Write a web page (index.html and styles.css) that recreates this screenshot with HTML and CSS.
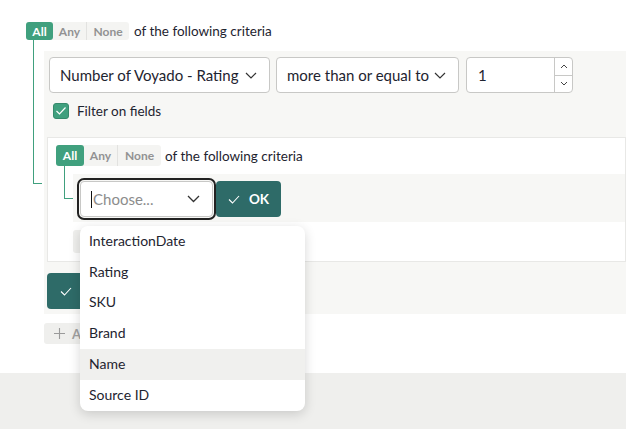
FILE: index.html
```html
<!DOCTYPE html>
<html>
<head>
<meta charset="utf-8">
<link rel="stylesheet" href="styles.css">
</head>
<body>
<div class="page">
  <div class="main">
    <div class="group">
      <div class="head">
        <div class="toggle">
          <span class="opt on">All</span><span class="opt">Any</span><span class="opt last">None</span>
        </div>
        <span class="head-text">of the following criteria</span>
      </div>
      <div class="panel outer">
        <div class="row">
          <div class="select s1"><span>Number of Voyado - Rating</span>
            <svg class="chev" width="12" height="7" viewBox="0 0 12 7"><path d="M1 1l5 5 5-5" fill="none" stroke="#333" stroke-width="1.2"/></svg>
          </div>
          <div class="select s2"><span>more than or equal to</span>
            <svg class="chev" width="12" height="7" viewBox="0 0 12 7"><path d="M1 1l5 5 5-5" fill="none" stroke="#333" stroke-width="1.2"/></svg>
          </div>
          <div class="number">
            <span class="num-val">1</span>
            <div class="spin">
              <div class="spin-btn"><svg width="8" height="5" viewBox="0 0 8 5"><path d="M1 4l3-3 3 3" fill="none" stroke="#444" stroke-width="1"/></svg></div>
              <div class="spin-btn"><svg width="8" height="5" viewBox="0 0 8 5"><path d="M1 1l3 3 3-3" fill="none" stroke="#444" stroke-width="1"/></svg></div>
            </div>
          </div>
        </div>
        <div class="check-row">
          <span class="checkbox"><svg width="12" height="10" viewBox="0 0 12 10"><path d="M1.5 5l3 3 6-6.5" fill="none" stroke="#fff" stroke-width="1.2"/></svg></span>
          <span class="check-label">Filter on fields</span>
        </div>
        <div class="nested">
          <div class="head small">
            <div class="toggle">
              <span class="opt on">All</span><span class="opt">Any</span><span class="opt last">None</span>
            </div>
            <span class="head-text">of the following criteria</span>
          </div>
          <div class="panel inner">
            <div class="choose">
              <span class="caret"></span><span class="placeholder">Choose...</span>
              <svg class="chev" width="13" height="8" viewBox="0 0 13 8"><path d="M1 1l5.5 5.5L12 1" fill="none" stroke="#333" stroke-width="1.3"/></svg>
            </div>
            <button class="ok">
              <svg width="12" height="9" viewBox="0 0 12 9"><path d="M1 4.5l3.5 3.5L11 1" fill="none" stroke="#fff" stroke-width="1.1"/></svg>
              <span>OK</span>
            </button>
          </div>
          <button class="add nested-add" aria-label="Add"></button>
        </div>
        <button class="ok outer-ok" aria-label="OK">
          <svg width="12" height="9" viewBox="0 0 12 9"><path d="M1 4.5l3.5 3.5L11 1" fill="none" stroke="#fff" stroke-width="1.1"/></svg>
        </button>
      </div>
      <button class="add outer-add">
        <svg class="plus" width="11" height="11" viewBox="0 0 11 11"><path d="M5.5 0v11M0 5.5h11" stroke="#9a9a9a" stroke-width="1.1"/></svg>
        <span>Add</span>
      </button>
    </div>
  </div>
  <div class="footer"></div>

  <ul class="menu">
    <li>InteractionDate</li>
    <li>Rating</li>
    <li>SKU</li>
    <li>Brand</li>
    <li class="hover">Name</li>
    <li>Source ID</li>
  </ul>
</div>
</body>
</html>
```

FILE: styles.css
```css
* { box-sizing: border-box; }
html, body { margin: 0; padding: 0; }
body {
  font-family: Lato, "Open Sans", sans-serif;
  color: #1e2430;
  background: #fff;
  width: 626px;
  height: 429px;
  overflow: hidden;
}
.page { position: relative; width: 626px; height: 429px; }
.main {
  height: 373px;
  padding: 22px 0 0 26px;
  overflow: hidden;
}
.footer { height: 56px; background: #efefed; }

.head { display: flex; align-items: center; height: 18px; }
.toggle {
  display: flex;
  background: #f4f4f2;
  border-radius: 3px;
  height: 18px;
}
.opt {
  font-size: 12px;
  font-weight: 700;
  color: #929292;
  display: flex;
  align-items: center;
  justify-content: center;
  height: 18px;
  border-right: 1px solid #e2e2e0;
}
.opt.on {
  background: #40a07e;
  color: #fff;
  border-radius: 3px;
  border-right: none;
  width: 27px;
}
.opt:nth-child(2) { width: 34px; }
.opt.last { width: 42px; border-right: none; }
.head-text { font-size: 13.5px; margin-left: 5px; color: #1e2430; }
.head.small { height: 21px; }
.head.small .toggle, .head.small .opt { height: 21px; }
.head.small .opt.on { width: 28px; }
.head.small .opt.last { width: 43px; }
.head.small .head-text { margin-left: 4px; }

.panel { position: relative; background: #f7f7f5; }
.panel::before {
  content: "";
  position: absolute;
  border-left: 1px solid #40a07e;
  border-bottom: 1px solid #40a07e;
}
.outer {
  margin: 11px 0 0 18px;
  padding: 6px 0 5px 3px;
}
.outer::before { left: -11px; top: -11px; width: 8px; height: calc(50% + 11px); }

.row { display: flex; gap: 6px; padding-left: 2px; }
.select {
  height: 36px;
  background: #fff;
  border: 1px solid #c8c8c6;
  border-radius: 4px;
  display: flex;
  align-items: center;
  justify-content: space-between;
  padding: 0 12px 0 10px;
  font-size: 15px;
}
.s1 { width: 221px; }
.s2 { width: 183px; margin-right: 1px; }
.number {
  width: 107px;
  height: 36px;
  background: #fff;
  border: 1px solid #c8c8c6;
  border-radius: 4px;
  display: flex;
  align-items: center;
  justify-content: space-between;
  font-size: 15px;
}
.num-val { padding-left: 11px; }
.spin { display: flex; flex-direction: column; height: 100%; border-left: 1px solid #c8c8c6; width: 18px; }
.spin-btn { flex: 1; display: flex; align-items: center; justify-content: center; }
.spin-btn:first-child { border-bottom: 1px solid #c8c8c6; }

.check-row { display: flex; align-items: center; margin: 10px 0 0 6px; height: 16px; }
.checkbox {
  width: 16px; height: 16px;
  background: #40a07e;
  border: 1px solid #368a6c;
  border-radius: 3px;
  display: flex; align-items: center; justify-content: center;
}
.check-label { font-size: 13.5px; margin-left: 8px; }

.nested {
  margin-top: 18px;
  background: #fff;
  border: 1px solid #e8e8e6;
  padding: 7px 0 8px 8px;
}
.inner {
  margin: 8px 0 0 17px;
  padding: 7px 0 5px 7px;
  display: flex;
  align-items: center;
  gap: 3px;
}
.inner::before { left: -9px; top: -8px; width: 8px; height: calc(50% + 8px); }
.choose {
  width: 133px;
  height: 36px;
  background: #fff;
  border: 1px solid #c8c8c6;
  border-radius: 4px;
  outline: 2px solid #222;
  outline-offset: 1px;
  display: flex;
  align-items: center;
  padding: 0 12px 0 10px;
  font-size: 15px;
}
.caret { width: 1px; height: 17px; background: #111; margin-right: 1px; }
.placeholder { color: #8c8c8c; flex: 1; }

.ok {
  height: 36px;
  width: 65px;
  border: none;
  border-radius: 4px;
  background: #2e6b68;
  color: #fff;
  font-family: inherit;
  font-weight: 700;
  font-size: 13.5px;
  display: flex;
  align-items: center;
  justify-content: center;
  gap: 9px;
  padding: 0;
}
.outer-ok { margin-top: 11px; justify-content: flex-start; padding-left: 13px; }

.add {
  border: none;
  background: #efefed;
  color: #a0a0a0;
  font-family: inherit;
  font-weight: 700;
  font-size: 13px;
  border-radius: 3px;
  display: flex;
  align-items: center;
  gap: 7px;
  padding: 0 10px;
}
.nested-add { margin: 8px 0 0 17px; height: 23px; width: 60px; }
.outer-add { margin: 9px 0 0 18px; height: 21px; }

.menu {
  position: absolute;
  left: 80px;
  top: 226px;
  width: 225px;
  margin: 0;
  padding: 0;
  list-style: none;
  background: #fff;
  border-radius: 8px;
  box-shadow: 0 3px 12px rgba(0,0,0,0.16);
  overflow: hidden;
}
.menu li {
  height: 30.8px;
  display: flex;
  align-items: center;
  padding: 0 0 2px 9px;
  font-size: 14px;
  color: #1e2430;
}
.menu li.hover { background: #f0f0ee; }
```
